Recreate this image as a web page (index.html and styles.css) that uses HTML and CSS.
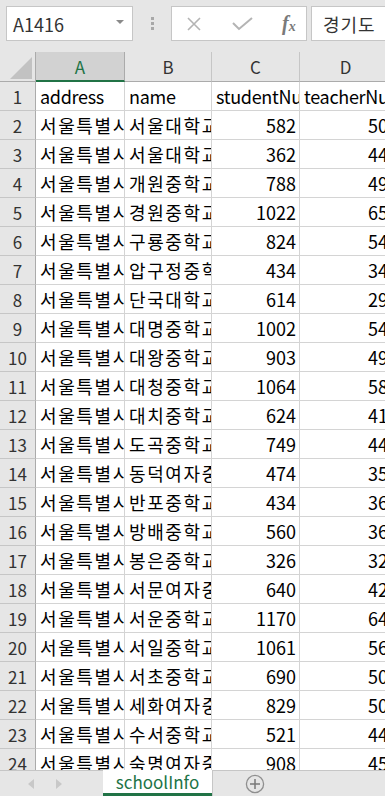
FILE: index.html
```html
<!DOCTYPE html>
<html lang="ko">
<head>
    <meta charset="UTF-8">
    <meta name="viewport" content="width=device-width, initial-scale=1.0">
    <title>schoolInfo</title>
    <link rel="stylesheet" href="styles.css">
</head>
<body>
    <div class="formula-bar">
        <div class="name-box">
            <span>A1416</span>
            <svg class="caret" width="8" height="5" viewBox="0 0 8 5"><path d="M0 0h8L4 4z" fill="#8a8a8a"/></svg>
        </div>
        <div class="grip"><i></i><i></i><i></i></div>
        <div class="fx-buttons">
            <svg width="14" height="14" viewBox="0 0 14 14"><path d="M1 1l12 12M13 1L1 13" stroke="#b4b4b4" stroke-width="1.6" fill="none"/></svg>
            <svg width="21" height="14" viewBox="0 0 21 14"><path d="M1 6l6 6L20 1" stroke="#b4b4b4" stroke-width="2" fill="none"/></svg>
            <span class="fx">f<sub>x</sub></span>
        </div>
        <div class="formula-input">경기도</div>
    </div>

    <div class="sheet">
        <div class="row head">
            <div class="corner">
                <svg width="22" height="22" viewBox="0 0 22 22"><path d="M22 0V22H0z" fill="#c2c2c2"/></svg>
            </div>
            <div class="col-head selected">A</div>
            <div class="col-head">B</div>
            <div class="col-head">C</div>
            <div class="col-head">D</div>
        </div>
        <div id="rows"></div>
    </div>

    <div class="tab-bar">
        <div class="tab-nav">
            <svg width="6" height="10" viewBox="0 0 6 10"><path d="M6 0v10L0 5z" fill="#c8c8c8"/></svg>
            <svg width="6" height="10" viewBox="0 0 6 10"><path d="M0 0v10l6-5z" fill="#c8c8c8"/></svg>
        </div>
        <div class="tab">schoolInfo</div>
        <div class="add-sheet">
            <svg width="20" height="20" viewBox="0 0 20 20"><circle cx="10" cy="10" r="8.6" stroke="#8f8f8f" stroke-width="1.3" fill="none"/><path d="M10 5v10M5 10h10" stroke="#7a7a7a" stroke-width="1.5"/></svg>
        </div>
    </div>

    <script>
        const data = [
            ['서울대학교', 582, 50],
            ['서울대학교', 362, 44],
            ['개원중학교', 788, 49],
            ['경원중학교', 1022, 65],
            ['구룡중학교', 824, 54],
            ['압구정중학교', 434, 34],
            ['단국대학교', 614, 29],
            ['대명중학교', 1002, 54],
            ['대왕중학교', 903, 49],
            ['대청중학교', 1064, 58],
            ['대치중학교', 624, 41],
            ['도곡중학교', 749, 44],
            ['동덕여자중학교', 474, 35],
            ['반포중학교', 434, 36],
            ['방배중학교', 560, 36],
            ['봉은중학교', 326, 32],
            ['서문여자중학교', 640, 42],
            ['서운중학교', 1170, 64],
            ['서일중학교', 1061, 56],
            ['서초중학교', 690, 50],
            ['세화여자중학교', 829, 50],
            ['수서중학교', 521, 44],
            ['숙명여자중학교', 908, 45],
        ];

        const rows = document.getElementById('rows');

        function addRow(num, cells, ko) {
            const row = document.createElement('div');
            row.className = 'row';
            let html = `<div class="row-head">${num}</div>`;
            cells.forEach(c => {
                let cls = 'cell';
                if (typeof c === 'number') cls += ' num';
                else cls += ko ? ' ko' : ' latin';
                html += `<div class="${cls}"><span>${c}</span></div>`;
            });
            row.innerHTML = html;
            rows.appendChild(row);
        }

        addRow(1, ['address', 'name', 'studentNum', 'teacherNum'], false);
        data.forEach((d, i) => addRow(i + 2, ['서울특별시 강남구', d[0], d[1], d[2]], true));
    </script>
</body>
</html>
```

FILE: styles.css
```css
* {
    box-sizing: border-box;
}

body {
    margin: 0;
    width: 385px;
    height: 796px;
    overflow: hidden;
    display: flex;
    flex-direction: column;
    background-color: #e6e6e6;
    font-family: "Noto Sans CJK KR", "Noto Sans", sans-serif;
}

/* formula bar */

.formula-bar {
    height: 52px;
    flex: none;
    display: flex;
    align-items: flex-start;
    padding-top: 6px;
}

.name-box {
    margin-left: 6px;
    width: 127px;
    height: 35px;
    background: #fff;
    border: 1px solid #c6c6c6;
    display: flex;
    align-items: center;
    justify-content: space-between;
    padding: 0 8px 0 6px;
    font-size: 18px;
    color: #333;
}

.name-box .caret {
    margin-top: -2px;
}

.grip {
    width: 38px;
    height: 35px;
    display: flex;
    flex-direction: column;
    align-items: center;
    justify-content: center;
    gap: 2px;
}

.grip i {
    width: 3px;
    height: 3px;
    background: #a8a8a8;
}

.fx-buttons {
    width: 136px;
    height: 35px;
    background: #fff;
    border: 1px solid #c6c6c6;
    display: flex;
    align-items: center;
    padding: 0 0 0 15px;
}

.fx-buttons svg:first-child {
    margin-right: 31px;
}

.fx-buttons svg:nth-child(2) {
    margin-right: 29px;
}

.fx {
    font-family: "Liberation Serif", serif;
    font-style: italic;
    font-weight: bold;
    font-size: 20px;
    color: #7a7a7a;
}

.fx sub {
    font-size: 14px;
    vertical-align: -1px;
}

.formula-input {
    margin-left: 4px;
    flex: 1;
    height: 35px;
    background: #fff;
    border: 1px solid #c6c6c6;
    border-right: none;
    padding-left: 11px;
    display: flex;
    align-items: center;
    font-size: 18px;
    letter-spacing: 1px;
    color: #333;
}

/* grid */

.sheet {
    flex: 1;
    overflow: hidden;
    background: #fff;
}

.row {
    display: grid;
    grid-template-columns: 36px 89px 87px 88px 92px;
    height: 29px;
}

.row.head {
    height: 30px;
    background: #e6e6e6;
}

.corner {
    border-right: 1px solid #ababab;
    border-bottom: 1px solid #ababab;
    display: flex;
    align-items: flex-end;
    justify-content: flex-end;
    padding: 0 3px 2px 0;
}

.col-head {
    border-right: 1px solid #c6c6c6;
    border-bottom: 1px solid #ababab;
    display: flex;
    align-items: center;
    justify-content: center;
    font-size: 17px;
    color: #333;
}

.col-head.selected {
    background: #d2d2d2;
    color: #217346;
    border-bottom: 2px solid #217346;
    border-right-color: #ababab;
}

.row-head {
    background: #e6e6e6;
    border-right: 1px solid #ababab;
    border-bottom: 1px solid #c6c6c6;
    display: flex;
    align-items: center;
    justify-content: center;
    font-size: 17px;
    color: #333;
}

.cell {
    border-right: 1px solid #d4d4d4;
    border-bottom: 1px solid #d4d4d4;
    overflow: hidden;
    white-space: nowrap;
    display: flex;
    align-items: center;
    padding: 0 3px 0 4px;
    font-size: 18px;
    color: #000;
}

.cell.ko {
    letter-spacing: 1.6px;
}

.cell.latin {
    letter-spacing: -0.3px;
}

.cell.num {
    justify-content: flex-end;
}

/* sheet tabs */

.tab-bar {
    height: 26px;
    flex: none;
    display: flex;
    border-top: 1px solid #c6c6c6;
    background: #e6e6e6;
}

.tab-nav {
    width: 103px;
    display: flex;
    align-items: center;
    padding-left: 28px;
    gap: 22px;
}

.tab {
    width: 109px;
    margin-top: -1px;
    background: #fff;
    border-bottom: 3px solid #217346;
    display: flex;
    align-items: center;
    justify-content: center;
    font-size: 17px;
    color: #217346;
    box-shadow: 1px 0 0 #c6c6c6;
}

.add-sheet {
    display: flex;
    align-items: center;
    padding-left: 33px;
}
```
